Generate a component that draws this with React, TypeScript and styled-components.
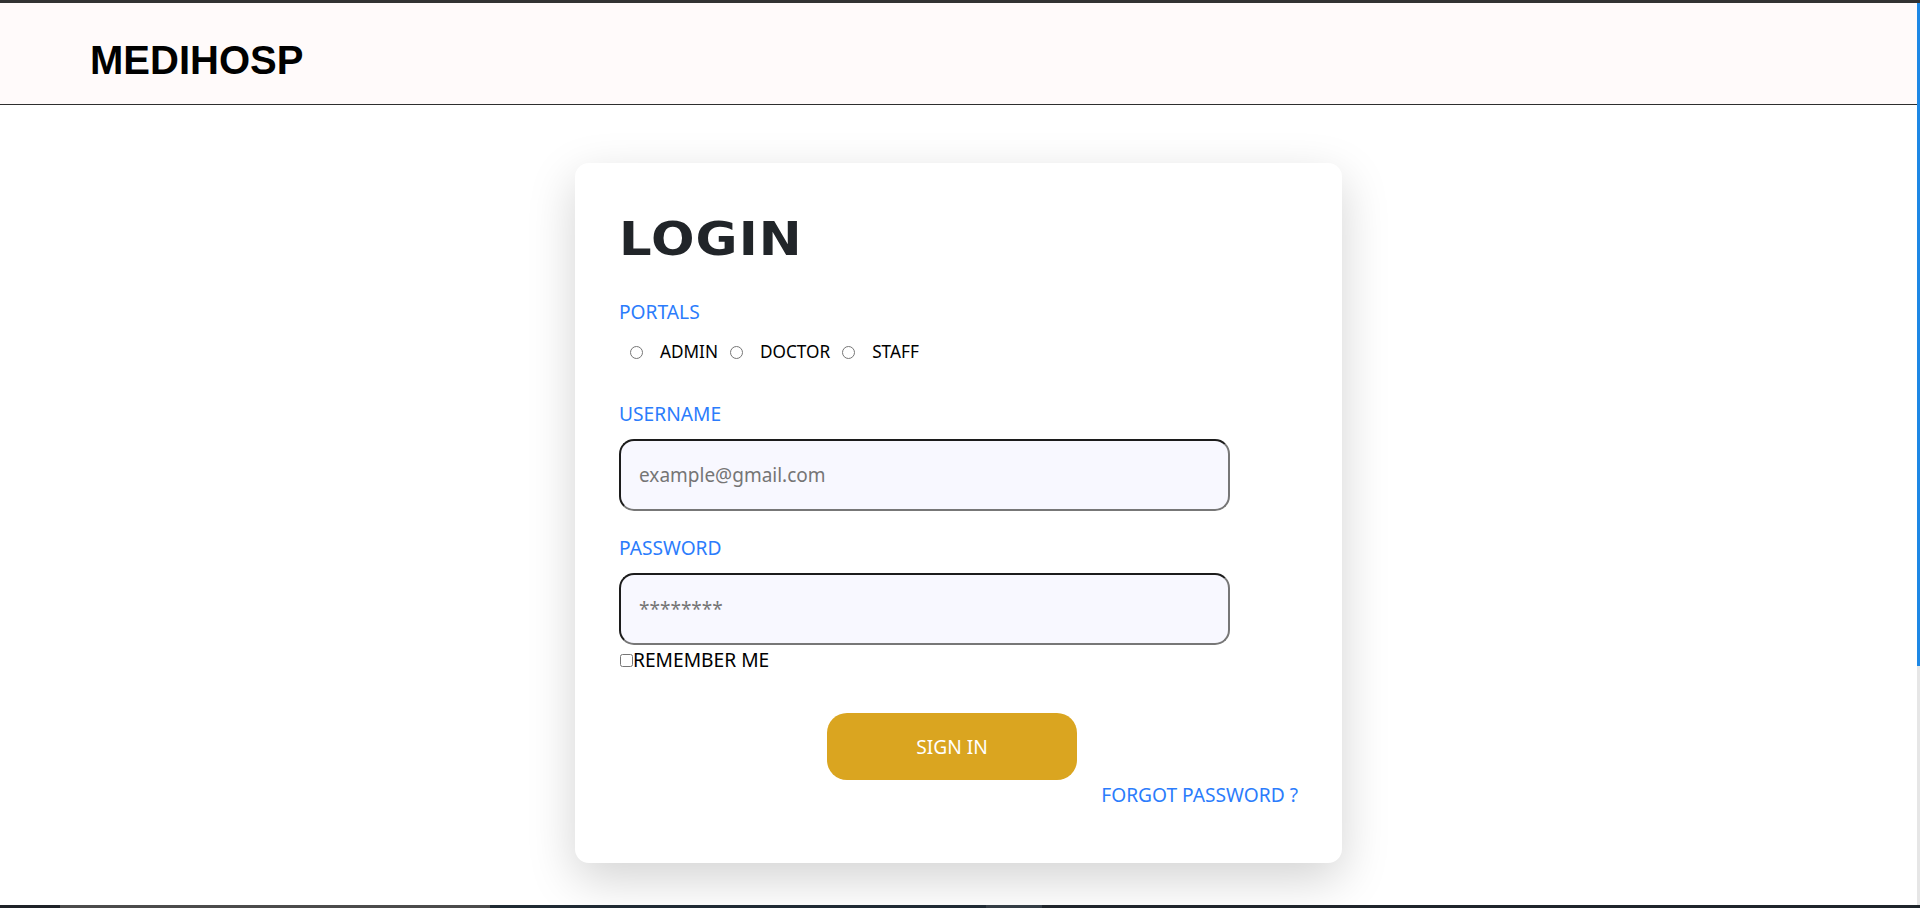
import React from 'react';
import styled, { createGlobalStyle } from 'styled-components';

const GlobalStyle = createGlobalStyle`
  html, body {
    margin: 0;
    padding: 0;
    height: 100%;
  }
  body {
    font-family: 'Noto Sans', 'Open Sans', sans-serif;
    background: #fff;
    overflow: hidden;
  }
  #root {
    height: 100%;
  }
  * {
    box-sizing: border-box;
  }
`;

// window chrome around the page (edges, scrollbar strip, taskbar)
const Frame = styled.div`
  display: flex;
  flex-direction: column;
  height: 100vh;
`;

const WindowEdge = styled.div`
  flex: 0 0 3px;
  background: #323232;
`;

const Viewport = styled.div`
  flex: 1;
  display: flex;
  min-height: 0;
`;

const Page = styled.div`
  flex: 1;
  display: flex;
  flex-direction: column;
  min-width: 0;
`;

const ScrollStrip = styled.div`
  flex: 0 0 3px;
  display: flex;
  flex-direction: column;
  background: #e6e6e6;
`;

const ScrollThumb = styled.div`
  flex: 0 0 663px;
  background: #1e88e5;
`;

const Taskbar = styled.div`
  flex: 0 0 3px;
  display: flex;
  background: #1f252b;
`;

interface ISegment {
  $w: number;
  $c: string;
}
const TaskSegment = styled.div<ISegment>`
  flex: 0 0 ${p => p.$w}px;
  background: ${p => p.$c};
`;

// header
const Header = styled.header`
  height: 102px;
  padding: 37px 0 0 90px;
  background: #fffafa;
  border-bottom: 1px solid #2e2e2e;
`;

const Brand = styled.h1`
  margin: 0;
  font-family: 'Liberation Sans', Arial, sans-serif;
  font-weight: 700;
  font-size: 40px;
  line-height: 40px;
  color: #000;
`;

// login card
const Main = styled.main`
  display: flex;
  justify-content: center;
  padding-top: 58px;
`;

const Card = styled.section`
  width: 767px;
  padding: 51.5px 44px 58.6px;
  border-radius: 14px;
  background: #fff;
  box-shadow: 0 1rem 3rem rgba(0, 0, 0, 0.175);
`;

const Title = styled.h2`
  margin: 0;
  font-family: 'DejaVu Sans', sans-serif;
  font-weight: 700;
  font-size: 47px;
  line-height: 47px;
  letter-spacing: 1px;
  color: #212529;
  transform: scaleX(1.09);
  transform-origin: left center;
`;

interface ILabel {
  $gap: number;
}
const Label = styled.div<ILabel>`
  margin-top: ${p => p.$gap}px;
  font-size: 19.2px;
  line-height: 18.6px;
  color: #2b7cfc;
`;

const RadioRow = styled.div`
  display: flex;
  align-items: center;
  gap: 12px;
  height: 16.5px;
  margin: 22.7px 0 0 11px;
`;

const RadioOption = styled.label`
  display: flex;
  align-items: center;
  gap: 17px;
  font-size: 17.2px;
  line-height: 16.5px;
  color: #000;
`;

const Radio = styled.input`
  margin: 0;
  width: 13px;
  height: 13px;
`;

const TextInput = styled.input`
  display: block;
  width: 611px;
  height: 72px;
  margin-top: 15.6px;
  padding: 0 18px;
  border: 2px solid;
  border-color: #1c1c1c #777 #777 #1c1c1c;
  border-radius: 15px;
  background: #f8f8ff;
  font-family: inherit;
  font-size: 19px;
  color: #212529;
  outline: none;
  &::placeholder {
    color: #757575;
  }
`;

const RememberRow = styled.label`
  display: flex;
  align-items: center;
  margin-top: 5.8px;
  font-size: 19.2px;
  line-height: 18.6px;
  color: #000;
`;

const Checkbox = styled.input`
  margin: 0 0 0 1px;
  width: 13px;
  height: 13px;
`;

const ButtonRow = styled.div`
  display: flex;
  justify-content: center;
  padding-right: 13px;
  margin-top: 43.6px;
`;

const SignInButton = styled.button`
  width: 250px;
  height: 67px;
  border: none;
  border-radius: 20px;
  background: #daa520;
  color: #fff;
  font-family: inherit;
  font-size: 19.2px;
  cursor: pointer;
`;

const ForgotRow = styled.div`
  display: flex;
  justify-content: flex-end;
  margin-top: 5.8px;
  font-size: 19.2px;
  line-height: 18.6px;
`;

const ForgotLink = styled.a`
  color: #2b7cfc;
  text-decoration: none;
`;

const portals = ['ADMIN', 'DOCTOR', 'STAFF'];

const taskbar: ISegment[] = [
  { $w: 60, $c: '#1e2227' },
  { $w: 430, $c: '#4b4b4b' },
  { $w: 496, $c: '#1f2a33' },
  { $w: 56, $c: '#343d45' },
];

export default function App() {
  return (
    <Frame>
      <GlobalStyle />
      <WindowEdge />
      <Viewport>
        <Page>
          <Header>
            <Brand>MEDIHOSP</Brand>
          </Header>
          <Main>
            <Card>
              <Title>LOGIN</Title>
              <Label $gap={41.3}>PORTALS</Label>
              <RadioRow>
                {portals.map(p => (
                  <RadioOption key={p}>
                    <Radio type="radio" name="portal" value={p} />
                    {p}
                  </RadioOption>
                ))}
              </RadioRow>
              <Label $gap={44.2}>USERNAME</Label>
              <TextInput type="email" placeholder="example@gmail.com" />
              <Label $gap={27.8}>PASSWORD</Label>
              <TextInput type="password" placeholder="********" />
              <RememberRow>
                <Checkbox type="checkbox" />
                REMEMBER ME
              </RememberRow>
              <ButtonRow>
                <SignInButton type="button">SIGN IN</SignInButton>
              </ButtonRow>
              <ForgotRow>
                <ForgotLink href="#">FORGOT PASSWORD ?</ForgotLink>
              </ForgotRow>
            </Card>
          </Main>
        </Page>
        <ScrollStrip>
          <ScrollThumb />
        </ScrollStrip>
      </Viewport>
      <Taskbar>
        {taskbar.map((s, i) => (
          <TaskSegment key={i} $w={s.$w} $c={s.$c} />
        ))}
      </Taskbar>
    </Frame>
  );
}
